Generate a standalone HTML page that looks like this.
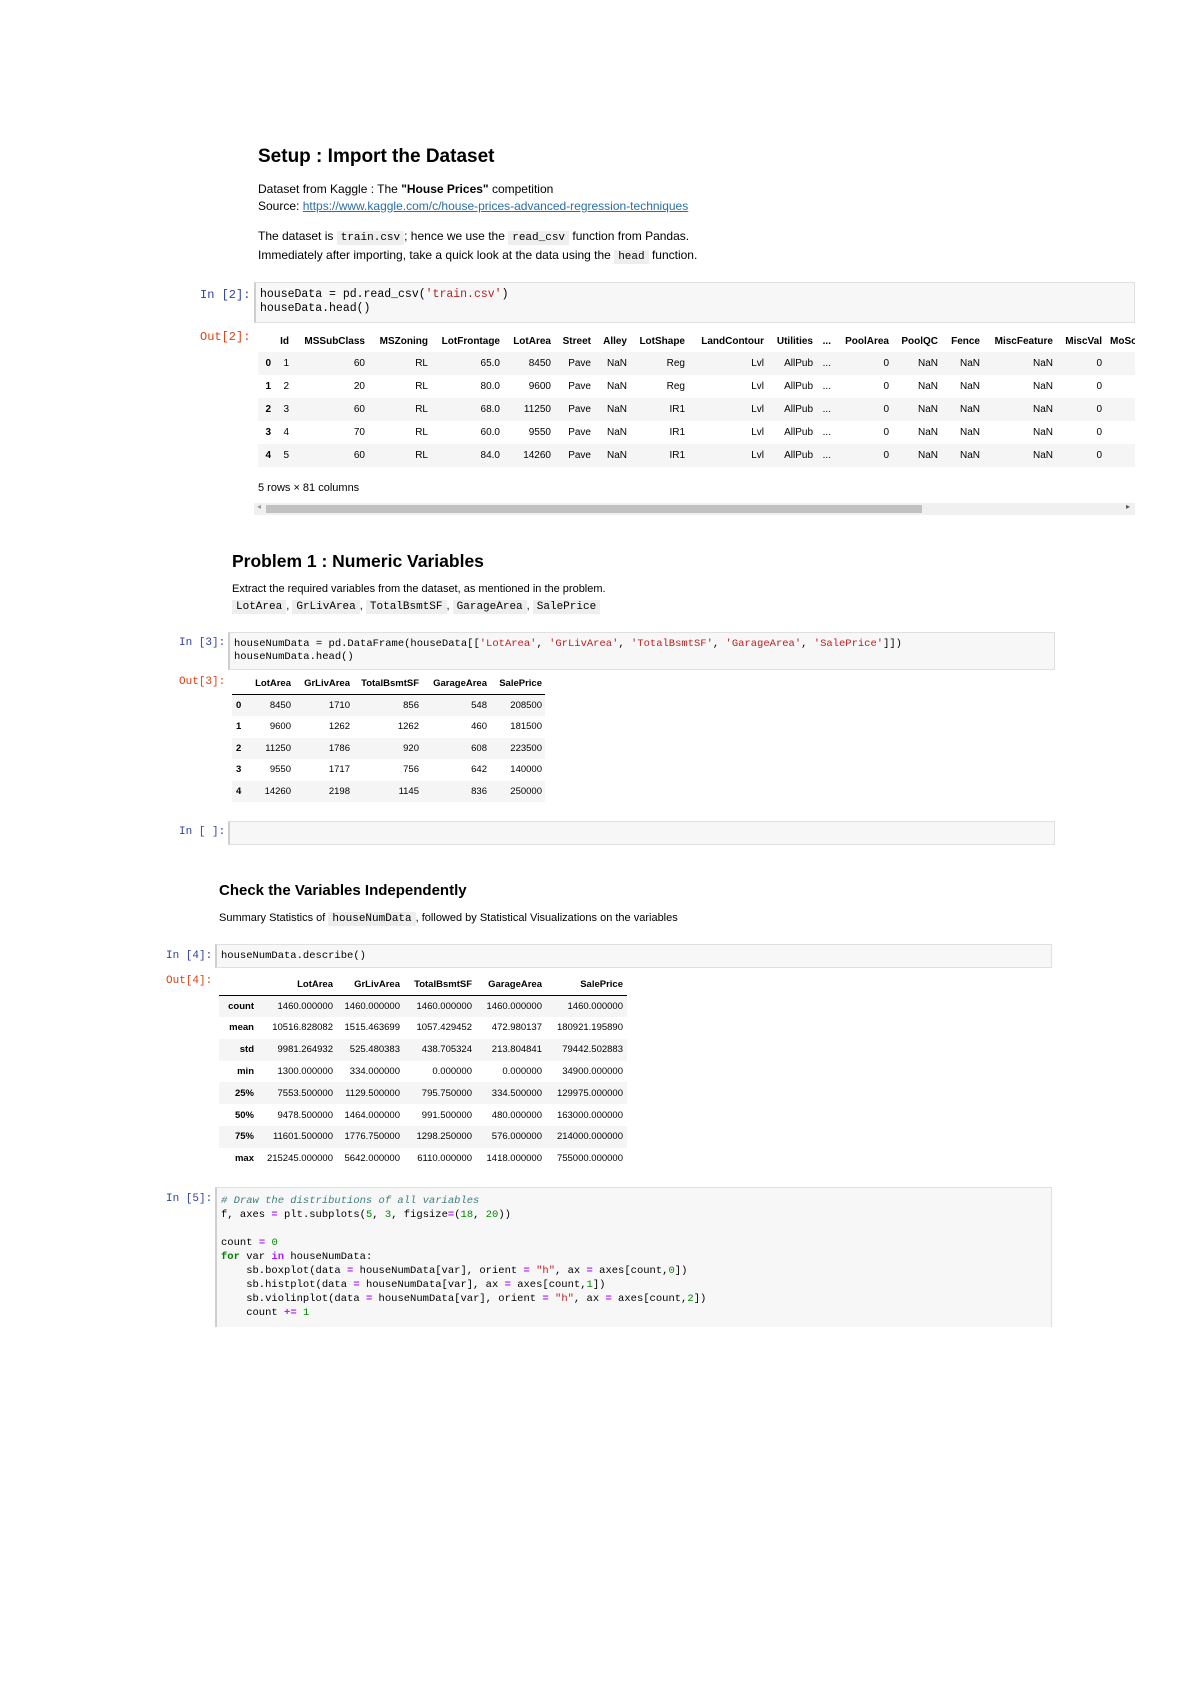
<!DOCTYPE html>
<html><head><meta charset="utf-8"><style>
*{margin:0;padding:0;box-sizing:border-box}
body{width:1200px;height:1696px;background:#fff;position:relative;font-family:"Liberation Sans",sans-serif;color:#000;overflow:hidden}
.a{position:absolute;white-space:nowrap}
h1{position:absolute;font-size:19px;font-weight:bold;white-space:nowrap}
.t{position:absolute;font-size:12px;white-space:nowrap}
code{font-family:"Liberation Mono",monospace;font-size:11px;background:#eee;padding:1px 4px}
.pin{position:absolute;font-family:"Liberation Mono",monospace;font-size:12px;color:#303F9F;white-space:nowrap}
.pout{position:absolute;font-family:"Liberation Mono",monospace;font-size:12px;color:#D84315;white-space:nowrap}
.cell{position:absolute;background:#f7f7f7;border:1px solid #e0e0e0;border-left:2px solid #cfcfcf;font-family:"Liberation Mono",monospace;font-size:11.5px;line-height:14px;padding:5px 4px;white-space:pre;color:#000}
table{position:absolute;border-collapse:collapse;table-layout:fixed;font-size:10px}
th,td{text-align:right;padding:0;white-space:nowrap;overflow:hidden;color:#000}
th{font-weight:bold}
tr.zr td,tr.zr th{background:#f5f5f5}
.k{color:#008000;font-weight:bold}.s{color:#BA2121}.c{color:#408080;font-style:italic}.o{color:#AA22FF;font-weight:bold}.n{color:#080}
</style></head><body>

<h1 style="left:258px;top:146px">Setup : Import the Dataset</h1>
<div class="t" style="left:258px;top:182px">Dataset from Kaggle : The <b>"House Prices"</b> competition</div>
<div class="t" style="left:258px;top:199px">Source: <span style="color:#296eaa;text-decoration:underline">https://www.kaggle.com/c/house-prices-advanced-regression-techniques</span></div>
<div class="t" style="left:258px;top:229px">The dataset is <code>train.csv</code>; hence we use the <code>read_csv</code> function from Pandas.</div>
<div class="t" style="left:258px;top:248px">Immediately after importing, take a quick look at the data using the <code>head</code> function.</div>

<div class="pin" style="left:200px;top:288px">In [2]:</div>
<div class="cell" style="left:254px;top:282px;width:881px;height:41px">houseData = pd.read_csv(<span class="s">'train.csv'</span>)
houseData.head()</div>
<div class="pout" style="left:200px;top:330px">Out[2]:</div>
<div class="a" style="left:258px;top:330px;width:877px;height:140px;overflow:hidden">
<table style="left:0;top:0;width:877px">
<colgroup><col style="width:13px"><col style="width:18px"><col style="width:76px"><col style="width:63px"><col style="width:72px"><col style="width:51px"><col style="width:40px"><col style="width:36px"><col style="width:58px"><col style="width:79px"><col style="width:49px"><col style="width:18px"><col style="width:58px"><col style="width:49px"><col style="width:42px"><col style="width:73px"><col style="width:49px"><col style="width:33px"></colgroup>
<tr style="height:22px"><th></th><th>Id</th><th>MSSubClass</th><th>MSZoning</th><th>LotFrontage</th><th>LotArea</th><th>Street</th><th>Alley</th><th>LotShape</th><th>LandContour</th><th>Utilities</th><th>...</th><th>PoolArea</th><th>PoolQC</th><th>Fence</th><th>MiscFeature</th><th>MiscVal</th><th style="text-align:left;padding-left:8px">MoSold</th></tr>
<tr class="zr" style="height:23px"><th>0</th><td>1</td><td>60</td><td>RL</td><td>65.0</td><td>8450</td><td>Pave</td><td>NaN</td><td>Reg</td><td>Lvl</td><td>AllPub</td><td>...</td><td>0</td><td>NaN</td><td>NaN</td><td>NaN</td><td>0</td><td></td></tr>
<tr style="height:23px"><th>1</th><td>2</td><td>20</td><td>RL</td><td>80.0</td><td>9600</td><td>Pave</td><td>NaN</td><td>Reg</td><td>Lvl</td><td>AllPub</td><td>...</td><td>0</td><td>NaN</td><td>NaN</td><td>NaN</td><td>0</td><td></td></tr>
<tr class="zr" style="height:23px"><th>2</th><td>3</td><td>60</td><td>RL</td><td>68.0</td><td>11250</td><td>Pave</td><td>NaN</td><td>IR1</td><td>Lvl</td><td>AllPub</td><td>...</td><td>0</td><td>NaN</td><td>NaN</td><td>NaN</td><td>0</td><td></td></tr>
<tr style="height:23px"><th>3</th><td>4</td><td>70</td><td>RL</td><td>60.0</td><td>9550</td><td>Pave</td><td>NaN</td><td>IR1</td><td>Lvl</td><td>AllPub</td><td>...</td><td>0</td><td>NaN</td><td>NaN</td><td>NaN</td><td>0</td><td></td></tr>
<tr class="zr" style="height:23px"><th>4</th><td>5</td><td>60</td><td>RL</td><td>84.0</td><td>14260</td><td>Pave</td><td>NaN</td><td>IR1</td><td>Lvl</td><td>AllPub</td><td>...</td><td>0</td><td>NaN</td><td>NaN</td><td>NaN</td><td>0</td><td></td></tr>
</table></div>
<div class="t" style="left:258px;top:482px;font-size:11px">5 rows × 81 columns</div>
<div class="a" style="left:254px;top:503px;width:881px;height:12px;background:#f0f0f0"></div>
<div class="a" style="left:266px;top:505px;width:656px;height:8px;background:#c1c1c1"></div>
<div class="a" style="left:257px;top:502px;font-size:8px;color:#999">◂</div>
<div class="a" style="left:1126px;top:502px;font-size:8px;color:#555">▸</div>

<h1 style="left:232px;top:551px;font-size:17.5px">Problem 1 : Numeric Variables</h1>
<div class="t" style="left:232px;top:583px;font-size:11px">Extract the required variables from the dataset, as mentioned in the problem.</div>
<div class="t" style="left:232px;top:600px;font-size:11px"><code>LotArea</code>, <code>GrLivArea</code>, <code>TotalBsmtSF</code>, <code>GarageArea</code>, <code>SalePrice</code></div>

<div class="pin" style="left:179px;top:637px;font-size:11px">In [3]:</div>
<div class="cell" style="left:228px;top:632px;width:827px;height:38px;font-size:10.5px;line-height:13px">houseNumData = pd.DataFrame(houseData[[<span class="s">'LotArea'</span>, <span class="s">'GrLivArea'</span>, <span class="s">'TotalBsmtSF'</span>, <span class="s">'GarageArea'</span>, <span class="s">'SalePrice'</span>]])
houseNumData.head()</div>
<div class="pout" style="left:179px;top:676px;font-size:11px">Out[3]:</div>
<table style="left:232px;top:674px;width:313px;font-size:9.5px">
<colgroup><col style="width:18px"><col style="width:41px"><col style="width:59px"><col style="width:69px"><col style="width:68px"><col style="width:58px"></colgroup>
<tr style="height:20px;border-bottom:1.5px solid #000"><th></th><th>LotArea</th><th>GrLivArea</th><th>TotalBsmtSF</th><th>GarageArea</th><th style="padding-right:3px">SalePrice</th></tr>
<tr class="zr" style="height:22px"><th style="text-align:left;padding-left:4px">0</th><td>8450</td><td>1710</td><td>856</td><td>548</td><td style="padding-right:3px">208500</td></tr>
<tr style="height:21.5px"><th style="text-align:left;padding-left:4px">1</th><td>9600</td><td>1262</td><td>1262</td><td>460</td><td style="padding-right:3px">181500</td></tr>
<tr class="zr" style="height:21.5px"><th style="text-align:left;padding-left:4px">2</th><td>11250</td><td>1786</td><td>920</td><td>608</td><td style="padding-right:3px">223500</td></tr>
<tr style="height:21.5px"><th style="text-align:left;padding-left:4px">3</th><td>9550</td><td>1717</td><td>756</td><td>642</td><td style="padding-right:3px">140000</td></tr>
<tr class="zr" style="height:21.5px"><th style="text-align:left;padding-left:4px">4</th><td>14260</td><td>2198</td><td>1145</td><td>836</td><td style="padding-right:3px">250000</td></tr>
</table>

<div class="pin" style="left:179px;top:826px;font-size:11px">In [ ]:</div>
<div class="cell" style="left:228px;top:821px;width:827px;height:24px"></div>

<h1 style="left:219px;top:882px;font-size:15px">Check the Variables Independently</h1>
<div class="t" style="left:219px;top:912px;font-size:11px">Summary Statistics of <code>houseNumData</code>, followed by Statistical Visualizations on the variables</div>

<div class="pin" style="left:166px;top:950px;font-size:11px">In [4]:</div>
<div class="cell" style="left:215px;top:944px;width:837px;height:24px;padding-top:4px;font-size:10.5px">houseNumData.describe()</div>
<div class="pout" style="left:166px;top:975px;font-size:11px">Out[4]:</div>
<table style="left:219px;top:974px;width:408px;font-size:9.5px">
<colgroup><col style="width:41px"><col style="width:73px"><col style="width:67px"><col style="width:72px"><col style="width:70px"><col style="width:85px"></colgroup>
<tr style="height:21px;border-bottom:1.5px solid #000"><th></th><th>LotArea</th><th>GrLivArea</th><th>TotalBsmtSF</th><th>GarageArea</th><th style="padding-right:4px">SalePrice</th></tr>
<tr class="zr" style="height:22px"><th style="padding-right:6px">count</th><td>1460.000000</td><td>1460.000000</td><td>1460.000000</td><td>1460.000000</td><td style="padding-right:4px">1460.000000</td></tr>
<tr style="height:21.8px"><th style="padding-right:6px">mean</th><td>10516.828082</td><td>1515.463699</td><td>1057.429452</td><td>472.980137</td><td style="padding-right:4px">180921.195890</td></tr>
<tr class="zr" style="height:21.8px"><th style="padding-right:6px">std</th><td>9981.264932</td><td>525.480383</td><td>438.705324</td><td>213.804841</td><td style="padding-right:4px">79442.502883</td></tr>
<tr style="height:21.8px"><th style="padding-right:6px">min</th><td>1300.000000</td><td>334.000000</td><td>0.000000</td><td>0.000000</td><td style="padding-right:4px">34900.000000</td></tr>
<tr class="zr" style="height:21.8px"><th style="padding-right:6px">25%</th><td>7553.500000</td><td>1129.500000</td><td>795.750000</td><td>334.500000</td><td style="padding-right:4px">129975.000000</td></tr>
<tr style="height:21.8px"><th style="padding-right:6px">50%</th><td>9478.500000</td><td>1464.000000</td><td>991.500000</td><td>480.000000</td><td style="padding-right:4px">163000.000000</td></tr>
<tr class="zr" style="height:21.8px"><th style="padding-right:6px">75%</th><td>11601.500000</td><td>1776.750000</td><td>1298.250000</td><td>576.000000</td><td style="padding-right:4px">214000.000000</td></tr>
<tr style="height:21.8px"><th style="padding-right:6px">max</th><td>215245.000000</td><td>5642.000000</td><td>6110.000000</td><td>1418.000000</td><td style="padding-right:4px">755000.000000</td></tr>
</table>

<div class="pin" style="left:166px;top:1193px;font-size:11px">In [5]:</div>
<div class="cell" style="left:215px;top:1187px;width:837px;height:140px;border-bottom:none;font-size:10.5px;line-height:14px;padding-top:6px"><span class="c"># Draw the distributions of all variables</span>
f, axes <span class="o">=</span> plt.subplots(<span class="n">5</span>, <span class="n">3</span>, figsize<span class="o">=</span>(<span class="n">18</span>, <span class="n">20</span>))

count <span class="o">=</span> <span class="n">0</span>
<span class="k">for</span> var <span class="o">in</span> houseNumData:
    sb.boxplot(data <span class="o">=</span> houseNumData[var], orient <span class="o">=</span> <span class="s">"h"</span>, ax <span class="o">=</span> axes[count,<span class="n">0</span>])
    sb.histplot(data <span class="o">=</span> houseNumData[var], ax <span class="o">=</span> axes[count,<span class="n">1</span>])
    sb.violinplot(data <span class="o">=</span> houseNumData[var], orient <span class="o">=</span> <span class="s">"h"</span>, ax <span class="o">=</span> axes[count,<span class="n">2</span>])
    count <span class="o">+=</span> <span class="n">1</span></div>

</body></html>
